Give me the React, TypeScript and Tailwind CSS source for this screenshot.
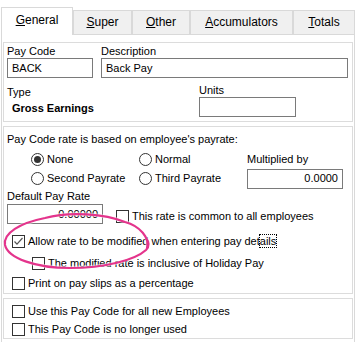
import React from "react";

function Checkbox({ checked = false }: { checked?: boolean }) {
  return (
    <span className="flex h-[13px] w-[13px] shrink-0 items-center justify-center border border-[#333333] bg-white">
      {checked && (
        <svg width="11" height="11" viewBox="0 0 11 11">
          <polyline points="1.5,5.5 4,8.2 9.5,2" fill="none" stroke="#555555" strokeWidth="1.2" />
        </svg>
      )}
    </span>
  );
}

function Radio({ checked = false }: { checked?: boolean }) {
  return (
    <span className="flex h-[13px] w-[13px] shrink-0 items-center justify-center rounded-full border border-[#333333] bg-white">
      {checked && <span className="h-[7px] w-[7px] rounded-full bg-[#333333]" />}
    </span>
  );
}

function Tab({ u, rest, w }: { u: string; rest: string; w: string }) {
  return (
    <div className={`${w} flex h-[24px] justify-center border-l border-r border-t border-[#d9d9d9] bg-[#f0f0f0] pt-[4px] text-[12px] leading-[14px]`}>
      <span>
        <span className="underline">{u}</span>
        {rest}
      </span>
    </div>
  );
}

const ELLIPSE =
  "M 147 248 C 150 238, 140 226, 125 222 C 105 214, 70 211, 45 218 C 20 223, 3 233, 5 245 C 8 258, 35 268, 70 268 C 105 268, 135 260, 146 250 C 150 246, 149 242, 146 238";

export default function App() {
  return (
    <div className="relative h-[342px] w-[355px] overflow-hidden bg-white font-['Liberation_Sans',Arial,sans-serif] text-[11px] leading-[13px] text-black">
      {/* tabs */}
      <div className="relative z-10 flex h-[34px] items-end pl-[1px]">
        <div className="-mb-px flex h-[28px] w-[72px] justify-center border-l border-r border-t border-[#d9d9d9] bg-white pt-[5px] text-[12px] leading-[14px]">
          <span>
            <span className="underline">G</span>eneral
          </span>
        </div>
        <Tab u="S" rest="uper" w="w-[59px]" />
        <Tab u="O" rest="ther" w="w-[58px]" />
        <Tab u="A" rest="ccumulators" w="w-[103px]" />
        <Tab u="T" rest="otals" w="w-[62px]" />
      </div>

      {/* panel */}
      <div className="ml-[1px] h-[400px] w-[354px] border-l border-r border-t border-[#d9d9d9] pl-[1px] pt-[7px]">
        {/* group 1 */}
        <div className="h-[80px] w-[350px] border border-[#dcdcdc] px-[3px] pt-[2px]">
          <div className="flex">
            <div className="w-[86px]">
              <div className="h-[13px]">Pay Code</div>
              <div className="flex h-[20px] items-center border border-[#7a7a7a] px-[4px]">BACK</div>
            </div>
            <div className="ml-[8px] w-[247px]">
              <div className="h-[13px]">Description</div>
              <div className="flex h-[20px] items-center border border-[#7a7a7a] px-[4px]">Back Pay</div>
            </div>
          </div>
          <div className="mt-[6px] flex">
            <div className="w-[192px] pt-[2px]">
              <div className="h-[13px]">Type</div>
              <div className="mt-[2px] pl-[5px] font-bold leading-[14px]">Gross Earnings</div>
            </div>
            <div className="w-[97px]">
              <div className="h-[13px]">Units</div>
              <div className="h-[20px] border border-[#7a7a7a]" />
            </div>
          </div>
        </div>

        {/* group 2 */}
        <div className="mt-[4px] h-[168px] w-[350px] border border-[#dcdcdc] pl-[3px] pt-[6px]">
          <div className="h-[13px]">Pay Code rate is based on employee&apos;s payrate:</div>
          <div className="ml-[24px] mt-[4px] grid grid-cols-[108px_108px_96px] grid-rows-[19px_19px]">
            <div className="flex items-center gap-[3px]">
              <Radio checked />
              <span>None</span>
            </div>
            <div className="flex items-center gap-[3px]">
              <Radio />
              <span>Normal</span>
            </div>
            <div className="flex items-center">Multiplied by</div>
            <div className="flex items-center gap-[3px]">
              <Radio />
              <span>Second Payrate</span>
            </div>
            <div className="flex items-center gap-[3px]">
              <Radio />
              <span>Third Payrate</span>
            </div>
            <div className="flex h-[20px] items-center justify-end self-center border border-[#7a7a7a] pr-[4px]">0.0000</div>
          </div>
          <div className="mt-[2px] h-[13px]">Default Pay Rate</div>
          <div className="mt-[1px] flex items-start">
            <div className="flex h-[20px] w-[96px] items-center justify-end border border-[#7a7a7a] pr-[4px]">0.00000</div>
            <div className="ml-[13px] mt-[6px] flex items-center gap-[3px]">
              <Checkbox />
              <span>This rate is common to all employees</span>
            </div>
          </div>
          <div className="mt-[7px] flex h-[21px] items-center gap-[3px] pl-[5px]">
            <Checkbox checked />
            <span>
              Allow rate to be modified when entering pay det
              <span className="outline-1 outline-dotted outline-black">ails</span>
            </span>
          </div>
          <div className="flex h-[22px] items-center gap-[3px] pl-[25px]">
            <Checkbox />
            <span>The modified rate is inclusive of Holiday Pay</span>
          </div>
          <div className="flex h-[19px] items-center gap-[3px] pl-[5px]">
            <Checkbox />
            <span>Print on pay slips as a percentage</span>
          </div>
        </div>

        {/* group 3 */}
        <div className="mt-[4px] h-[41px] w-[350px] border border-[#dcdcdc] pl-[8px] pt-[3px]">
          <div className="flex h-[18px] items-center gap-[3px]">
            <Checkbox />
            <span>Use this Pay Code for all new Employees</span>
          </div>
          <div className="flex h-[18px] items-center gap-[3px]">
            <Checkbox />
            <span>This Pay Code is no longer used</span>
          </div>
        </div>
      </div>

      {/* pink hand-drawn ellipse */}
      <svg className="pointer-events-none absolute left-0 top-0" width="355" height="342" viewBox="0 0 355 342">
        <path d={ELLIPSE} fill="none" stroke="#ffffff" strokeOpacity="0.5" strokeWidth="4" strokeLinecap="round" />
        <path d={ELLIPSE} fill="none" stroke="#e4348c" strokeWidth="2.2" strokeLinecap="round" />
      </svg>
    </div>
  );
}
